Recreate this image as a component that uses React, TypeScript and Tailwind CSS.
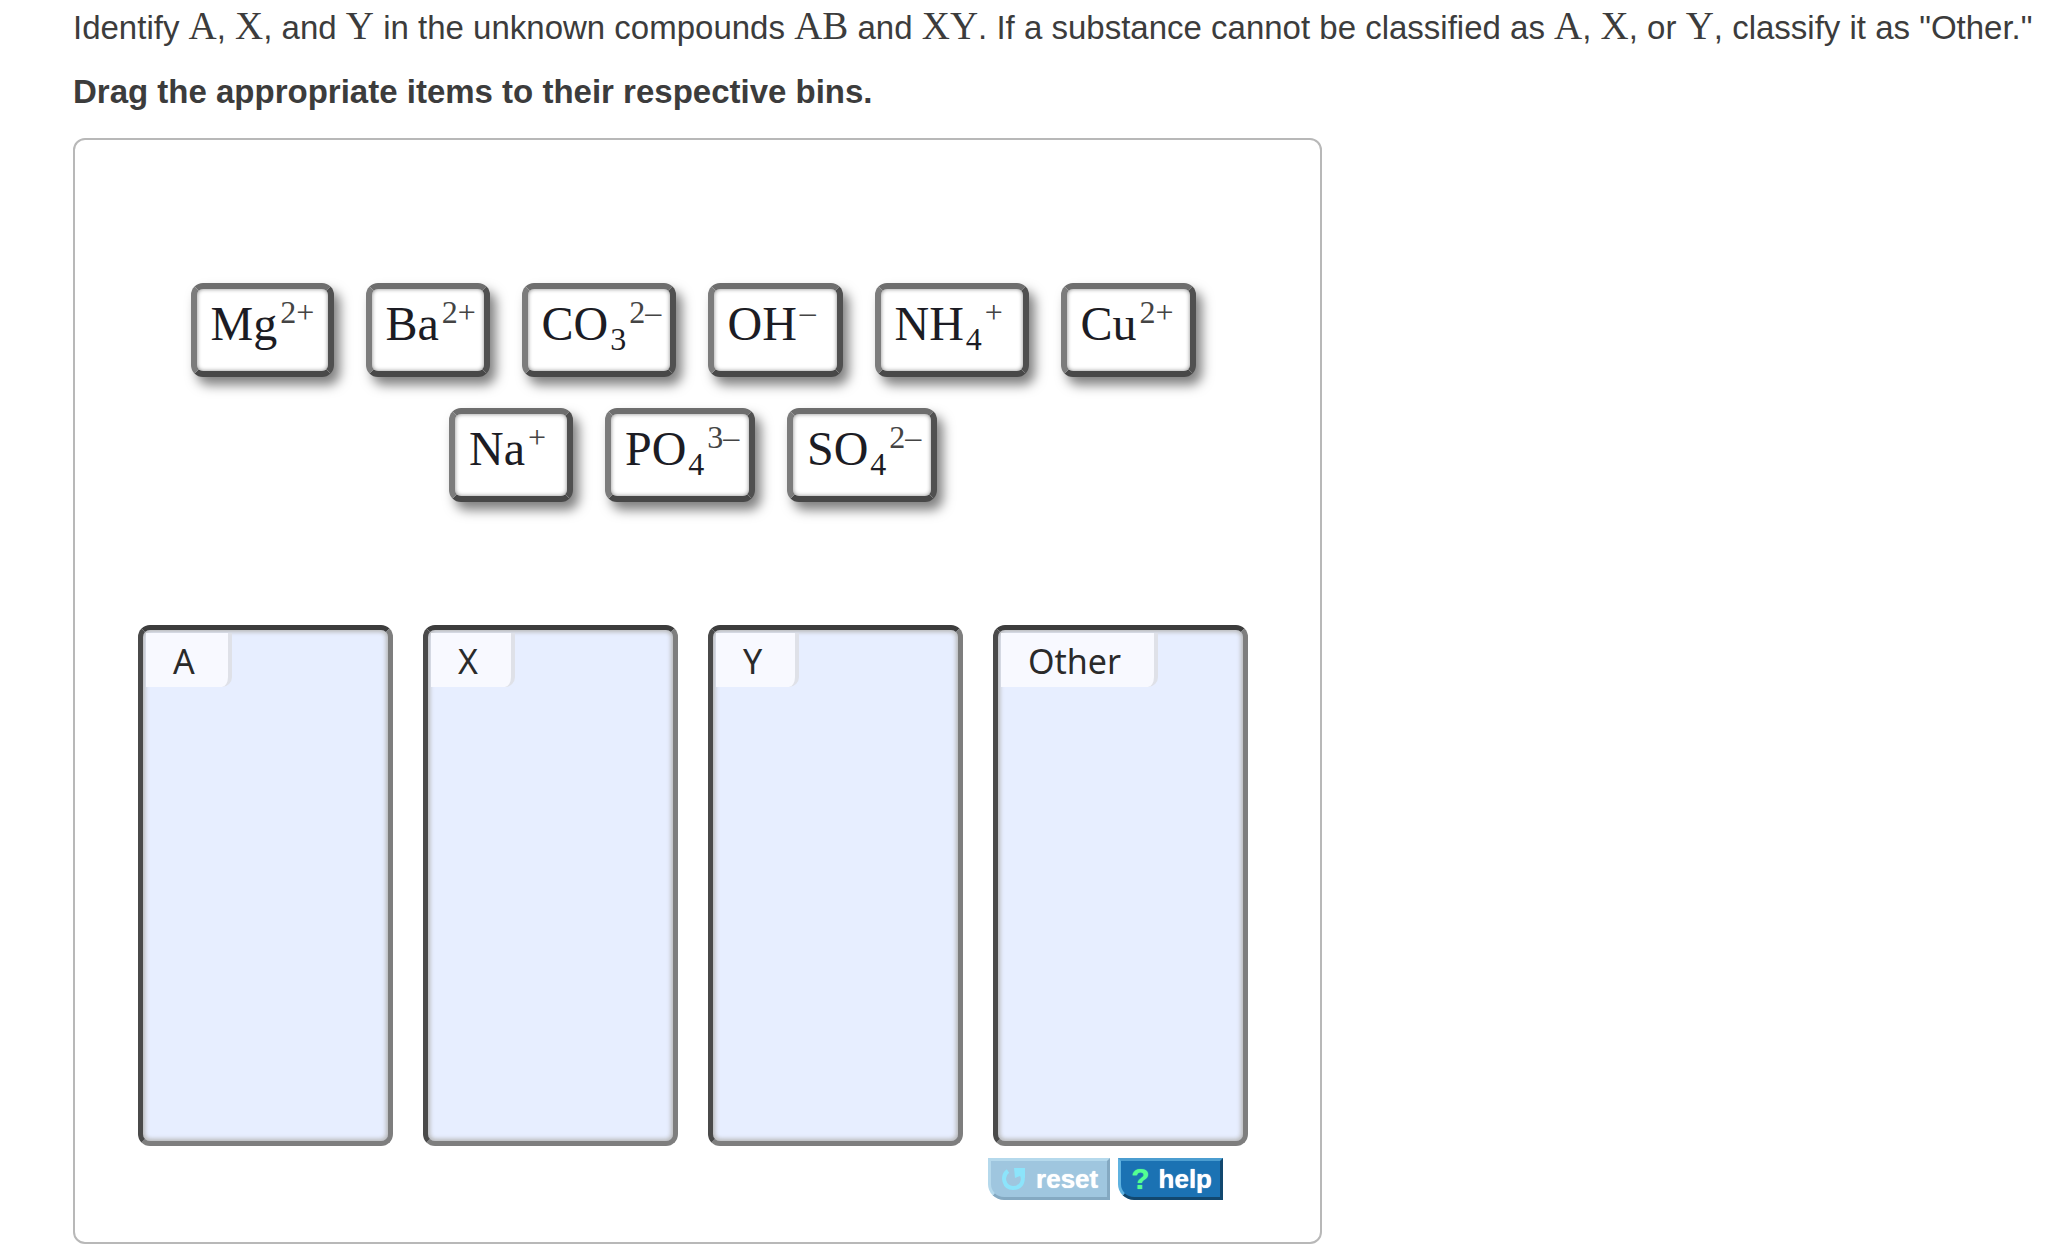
import type { ReactNode } from 'react';

type Ion = {
  symbol: string;
  sub?: string;
  charge: string;
  width: string;
};

const ionRows: Ion[][] = [
  [
    { symbol: 'Mg', charge: '2+', width: 'w-[143px]' },
    { symbol: 'Ba', charge: '2+', width: 'w-[124px]' },
    { symbol: 'CO', sub: '3', charge: '2–', width: 'w-[154px]' },
    { symbol: 'OH', charge: '–', width: 'w-[135px]' },
    { symbol: 'NH', sub: '4', charge: '+', width: 'w-[154px]' },
    { symbol: 'Cu', charge: '2+', width: 'w-[135px]' },
  ],
  [
    { symbol: 'Na', charge: '+', width: 'w-[124px]' },
    { symbol: 'PO', sub: '4', charge: '3–', width: 'w-[150px]' },
    { symbol: 'SO', sub: '4', charge: '2–', width: 'w-[150px]' },
  ],
];

const bins = ['A', 'X', 'Y', 'Other'];

function Sym({ children }: { children: ReactNode }) {
  return (
    <span className="font-['Liberation_Serif',serif] text-[39px] leading-none">{children}</span>
  );
}

function IonTile({ ion }: { ion: Ion }) {
  return (
    <button
      type="button"
      draggable
      className={`flex h-[94px] items-start rounded-[12px] border-[6px] border-t-[#6e6e6e] border-r-[#505050] border-b-[#484848] border-l-[#7c7c7c] bg-white pt-[7px] pl-[14px] text-left font-['Liberation_Serif',serif] text-[48px] leading-[52px] whitespace-nowrap text-[#1c1c24] shadow-[6px_8px_12px_rgba(0,0,0,0.5),inset_0_0_4px_rgba(0,0,0,0.45)] ${ion.width}`}
    >
      <span>
        {ion.symbol}
        {ion.sub && (
          <sub className="static ml-[2px] align-[-10px] text-[32px] leading-none">{ion.sub}</sub>
        )}
        <sup className="static ml-[3px] align-[17px] text-[32px] leading-none text-[#444]">
          {ion.charge}
        </sup>
      </span>
    </button>
  );
}

function Bin({ label }: { label: string }) {
  return (
    <section
      aria-label={label}
      className="h-[521px] flex-1 rounded-[12px] border-[5px] border-t-[#3c3c3c] border-r-[#7e7e7e] border-b-[#7e7e7e] border-l-[#4a4a4a] bg-[#e7eeff] p-[3px] shadow-[inset_0_0_4px_2px_#b8b8b8]"
    >
      <h2 className="inline-block h-[54px] rounded-br-[10px] border-r-4 border-[#dfe1e8] bg-[#f8f9ff] pr-[33px] pl-[27px] font-['Noto_Sans',sans-serif] text-[34px] leading-[56px] text-[#2a2a2a]">
        {label}
      </h2>
    </section>
  );
}

export default function App() {
  return (
    <main className="bg-white pl-[73px] font-['Liberation_Sans',sans-serif] text-[#3c3c3c]">
      <p className="pt-1 text-[33px] leading-[48px] whitespace-nowrap">
        Identify <Sym>A</Sym>, <Sym>X</Sym>, and <Sym>Y</Sym> in the unknown compounds{' '}
        <Sym>AB</Sym> and <Sym>XY</Sym>. If a substance cannot be classified as <Sym>A</Sym>,{' '}
        <Sym>X</Sym>, or <Sym>Y</Sym>, classify it as "Other."
      </p>
      <p className="mt-4 text-[33px] leading-[48px] font-bold">
        Drag the appropriate items to their respective bins.
      </p>

      <div className="mt-[22px] max-w-[1249px] rounded-[12px] border-2 border-[#b8b8b8] pt-[143px] pr-[72px] pb-[42px] pl-[63px]">
        <div className="flex flex-col items-center gap-[31px]">
          {ionRows.map((row, i) => (
            <div key={i} className="flex gap-8">
              {row.map((ion) => (
                <IonTile key={ion.symbol} ion={ion} />
              ))}
            </div>
          ))}
        </div>

        <div className="mt-[123px] flex gap-[30px]">
          {bins.map((label) => (
            <Bin key={label} label={label} />
          ))}
        </div>

        <div className="mt-3 mr-[25px] flex justify-end gap-2 text-[26px] leading-none font-bold text-white">
          <button
            type="button"
            className="flex h-[42px] items-center gap-[10px] rounded-bl-[16px] border-[3px] border-t-[#b5d9ec] border-r-[#84a9c2] border-b-[#84a9c2] border-l-[#b5d9ec] bg-[#9fc6df] pr-[9px] pl-[11px] text-shadow-[0_0_1px_white]"
          >
            <svg viewBox="0 0 24 24" className="h-6 w-6" fill="none">
              <path
                d="M6 4C-1 9 2 21 11 21C20 21 23 13 19 6"
                stroke="#8ce4fb"
                strokeWidth="4"
              />
              <path d="M12 1H23V11L18 9L13 11Z" fill="#8ce4fb" />
            </svg>
            reset
          </button>
          <button
            type="button"
            className="flex h-[42px] items-center gap-[9px] rounded-bl-[16px] border-[3px] border-t-[#4b9dd0] border-r-[#12486f] border-b-[#12486f] border-l-[#5fb2e0] bg-[#1b72b3] pr-2 pl-[10px] text-shadow-[0_0_1px_white]"
          >
            <span className="text-[30px] text-[#54ff92] text-shadow-[0_0_1px_#54ff92]">?</span>
            help
          </button>
        </div>
      </div>
    </main>
  );
}
